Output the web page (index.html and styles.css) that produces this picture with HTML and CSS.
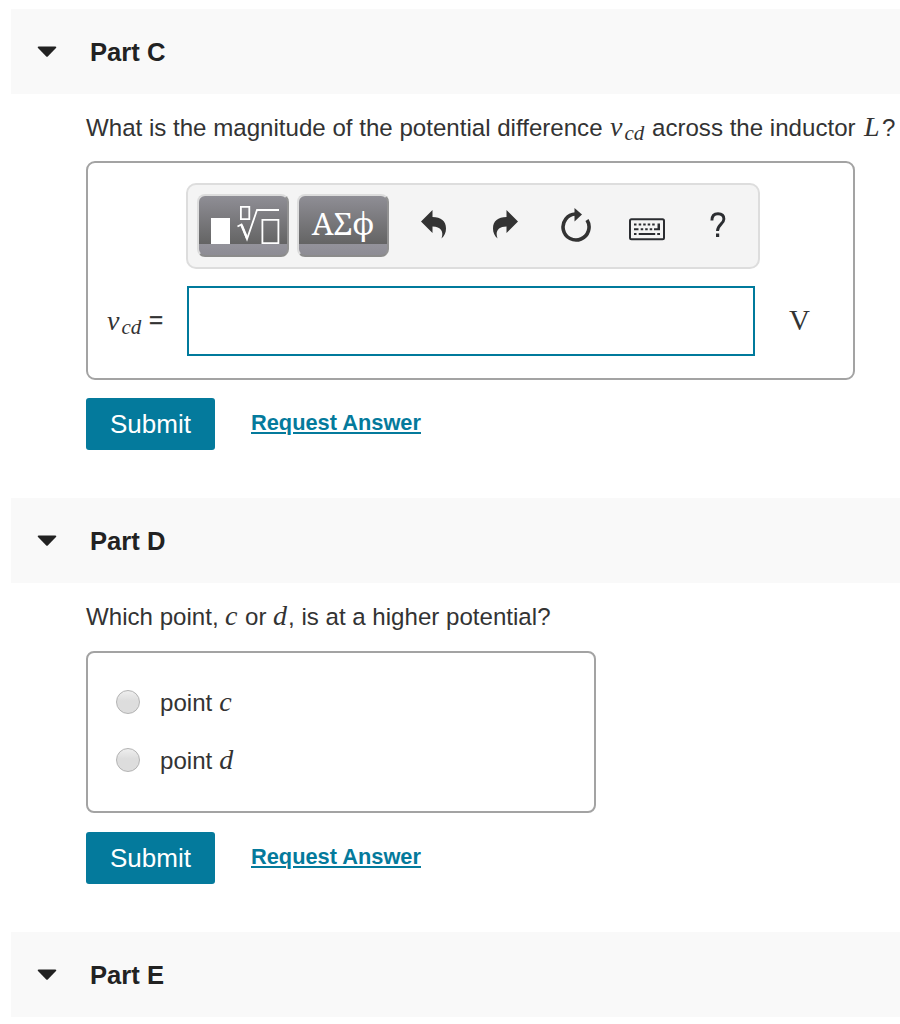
FILE: index.html
```
<!DOCTYPE html>
<html lang="en">
<head>
    <meta charset="utf-8">
    <title>Part C</title>
    <link rel="stylesheet" href="styles.css">
</head>
<body>
    <section class="part">
        <header class="part-header">
            <svg class="arrow" width="20" height="12" viewBox="0 0 20 12"><path d="M1.6 0.5H18.4Q20 .8 19 2L11 10.2Q10 11.2 9 10.2L1 2Q0 .8 1.6 .5Z" /></svg>
            <h2>Part C</h2>
        </header>
        <div class="part-body">
            <p class="question"><span class="lead-c">What is the magnitude of the potential difference</span><span class="math vcd"><i>v</i><sub>cd</sub></span><span class="tail-c">across the inductor</span><span class="math big-l">L</span>?</p>
            <div class="answer-box">
                <div class="toolbar">
                    <button type="button" class="tool" aria-label="Templates">
                        <svg width="88" height="59" viewBox="0 0 88 59">
                            <path d="M12 22h19v26H12z" fill="#fff" />
                            <path d="M41.900 10.900h8.400v12.200h-8.400zM63.400 23.900h16v23.200h-16z" fill="none" stroke="#fff" stroke-width="1.800" />
                            <path d="M38.500 30.500l4-2L48 43l10-29h22" fill="none" stroke="#fff" stroke-width="1.800" />
                            <path d="M42.500 29l5.500 13" stroke="#fff" stroke-width="2.500" />
                        </svg>
                    </button>
                    <button type="button" class="tool greek">ΑΣϕ</button>
                    <div class="icons">
                        <svg class="undo" width="26" height="30" viewBox="0 0 26 30"><path d="M0 11.5L11.5 0v7C20 7 25 11 25 18.5c0 4-1.6 7.5-4.5 10C23 21.500 20 16.500 11.500 16.500V23z" /></svg>
                        <svg class="redo" width="26" height="30" viewBox="0 0 26 30"><path d="M26 11.500L14.500 0v7C6 7 1 11 1 18.500c0 4 1.600 7.500 4.500 10C3 21.500 6 16.500 14.500 16.500V23z" /></svg>
                        <svg class="reset" width="32" height="34" viewBox="0 0 32 34"><path d="M15.500 6A13 13 0 1 0 27 12" fill="none" stroke="#333" stroke-width="3.600" /><path d="M14.500 0l7.500 6.500-7.500 7z" /></svg>
                        <svg class="keyboard" width="36" height="23" viewBox="0 0 36 23">
                            <rect x="1" y="1.200" width="34" height="20" rx="1.500" fill="none" stroke="#2b2d31" stroke-width="2" />
                            <path d="M5 5.500h2.500v2H5zm4.700 0h2.500v2H9.700zm4.500 0h2.500v2h-2.500zm4.500 0h2.500v2h-2.500zm4.500 0h2.500v2h-2.500zM5 10.200h4.500v2H5zm6.700 0h2.500v2h-2.500zm4.500 0h2.500v2h-2.500zm4.500 0h2.500v2h-2.500zM28.500 5.500H31v6.700h-6v-2h3.500zM5 15h2.500v2H5zm4.700 0h16.500v2H9.700zm18.500 0h2.800v2h-2.800z" />
                        </svg>
                        <svg class="help" width="16" height="26" viewBox="0 0 16 26"><path d="M1.900 8.500C1.900 4 4.200 1.700 8 1.700c3.700 0 5.900 2 5.900 5.300 0 5-6.400 5.500-6.400 12" fill="none" stroke="#2b2d31" stroke-width="2.900" /><path d="M6 21.500h3.200V25H6z" /></svg>
                    </div>
                </div>
                <div class="entry">
                    <label class="entry-label" for="vcd"><span class="math vcd"><i>v</i><sub>cd</sub></span><span class="equals">=</span></label>
                    <input type="text" id="vcd" class="field">
                    <span class="unit">V</span>
                </div>
            </div>
            <div class="actions">
                <button type="button" class="submit">Submit</button>
                <a href="#" class="request">Request Answer</a>
            </div>
        </div>
    </section>

    <section class="part part-d">
        <header class="part-header">
            <svg class="arrow" width="20" height="12" viewBox="0 0 20 12"><path d="M1.6 0.5H18.4Q20 .8 19 2L11 10.2Q10 11.2 9 10.2L1 2Q0 .8 1.6 .5Z" /></svg>
            <h2>Part D</h2>
        </header>
        <div class="part-body">
            <p class="question"><span class="lead-d">Which point,</span><span class="math q-c">c</span><span class="or">or</span><span class="math q-d">d</span>, is at a higher potential?</p>
            <div class="choice-box">
                <label class="choice"><input type="radio" name="point"><span>point</span><span class="math choice-c">c</span></label>
                <label class="choice"><input type="radio" name="point"><span>point</span><span class="math choice-d">d</span></label>
            </div>
            <div class="actions">
                <button type="button" class="submit">Submit</button>
                <a href="#" class="request">Request Answer</a>
            </div>
        </div>
    </section>

    <section class="part">
        <header class="part-header">
            <svg class="arrow" width="20" height="12" viewBox="0 0 20 12"><path d="M1.6 0.5H18.4Q20 .8 19 2L11 10.2Q10 11.2 9 10.2L1 2Q0 .8 1.6 .5Z" /></svg>
            <h2>Part E</h2>
        </header>
    </section>
</body>
</html>
```

FILE: styles.css
```
* {
    box-sizing: border-box;
    margin: 0;
    padding: 0;
}

body {
    padding: 9px 0 0 11px;
    background: #fff;
    color: #333;
    font-family: "Liberation Sans", Arial, sans-serif;
    font-size: 24.1px;
    overflow: hidden;
}

svg {
    display: block;
    fill: #2b2d31;
}

.part-header {
    display: flex;
    align-items: center;
    height: 85px;
    padding-left: 26px;
    background: #f9f9f9;
    color: #222;
}

.arrow {
    margin-right: 33px;
    fill: #222;
}

.part-header h2 {
    padding-top: 2px;
    font-size: 25.6px;
}

.part-body {
    padding: 0 0 48px 75px;
}

.question {
    display: flex;
    align-items: baseline;
    height: 67px;
    line-height: 66px;
    white-space: nowrap;
}

.part-d .question {
    height: 68px;
}

.lead-c {
    width: 524px;
}

.tail-c {
    width: 212px;
}

.lead-d {
    width: 139px;
}

.or {
    width: 28px;
}

/* math */
.math {
    font-family: "Liberation Serif", "Times New Roman", serif;
    font-style: italic;
    font-size: 28px;
}

.vcd {
    width: 42px;
    white-space: nowrap;
}

.vcd sub {
    margin-left: 2px;
    font-size: 21px;
    line-height: 0;
    vertical-align: -4px;
}

.big-l {
    width: 18px;
}

.q-c {
    width: 20px;
}

.q-d {
    width: 15px;
}

/* Part C answer */
.answer-box {
    width: 769px;
    height: 219px;
    padding-top: 20px;
    border: 2px solid #a3a3a3;
    border-radius: 9px;
}

.toolbar {
    display: flex;
    width: 574px;
    height: 86px;
    margin-left: 98px;
    padding: 9px 0 0 9px;
    border: 2px solid #ddd;
    border-radius: 10px;
    background: #f4f4f4;
}

.tool {
    width: 92px;
    height: 63px;
    margin-right: 8px;
    border: 2px solid #999;
    border-color: #dcdcdc #929292 #8b8b8b #dcdcdc;
    border-radius: 8px;
    background: linear-gradient(#8f8e95, #646464 48px, #94939b 48px, #8d8c94);
    color: #fff;
}

.greek {
    padding-bottom: 5px;
    font-family: "Noto Serif", "Liberation Serif", serif;
    font-size: 31px;
}

.icons {
    display: grid;
    grid-template-columns: 71px 70px 67px 81px 16px;
    align-items: start;
    padding-left: 24px;
}

.undo,
.redo {
    margin-top: 16px;
    fill: #333;
}

.reset {
    margin-top: 14px;
    margin-left: -2px;
    fill: #333;
}

.keyboard {
    margin-top: 24px;
}

.help {
    margin-top: 18px;
}

.entry {
    display: flex;
    align-items: center;
    height: 70px;
    margin-top: 17px;
}

.entry-label {
    display: flex;
    align-items: baseline;
    width: 99px;
    padding-left: 19px;
}

.equals {
    position: relative;
    top: -2px;
    -webkit-text-stroke: 0.4px #333;
}

.field {
    width: 568px;
    height: 70px;
    padding: 0 10px;
    border: 2px solid #007a9c;
    font-size: 24px;
}

.unit {
    margin-left: 34px;
    padding-bottom: 1px;
    font-family: "Liberation Serif", "Times New Roman", serif;
    font-size: 29px;
}

/* buttons */
.actions {
    display: flex;
    margin-top: 18px;
}

.part-d .actions {
    margin-top: 19px;
}

.submit {
    width: 129px;
    height: 52px;
    border: 0;
    border-radius: 3px;
    background: #047a9c;
    color: #fff;
    font-family: inherit;
    font-size: 26px;
}

.request {
    margin: 12px 0 0 36px;
    color: #047a9c;
    font-size: 21.8px;
    font-weight: bold;
}

/* Part D answer */
.choice-box {
    width: 510px;
    height: 162px;
    padding: 20px 28px;
    border: 2px solid #a3a3a3;
    border-radius: 8px;
}

.choice {
    display: flex;
    align-items: baseline;
    height: 58px;
    line-height: 57px;
}

.choice input {
    align-self: center;
    appearance: none;
    width: 24px;
    height: 24px;
    margin-right: 20px;
    border: 1px solid #b3b3b3;
    border-radius: 50%;
    background: linear-gradient(#eee, #ddd 45%);
}

.choice .math {
    margin-left: 7px;
}
```
